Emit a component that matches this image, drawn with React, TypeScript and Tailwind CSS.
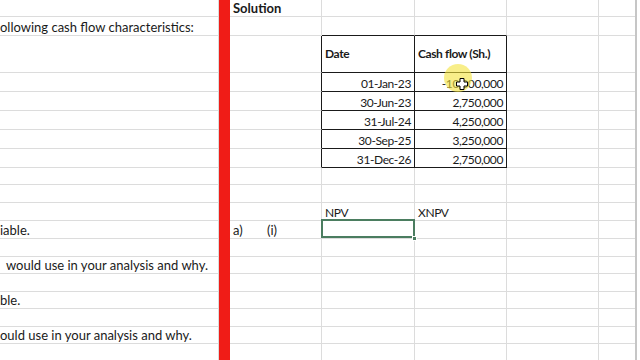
import type { ReactNode } from "react";

type Row = {
  h: number;
  a?: ReactNode;
  b?: ReactNode;
  c?: ReactNode;
  d?: ReactNode;
  cAlign?: "left" | "right";
  dAlign?: "left" | "right";
  topOfTable?: boolean;
  inTable?: boolean;
  head?: boolean;
  selected?: boolean;
};

const rows: Row[] = [
  { h: 17, b: <span className="font-bold text-[13px] tracking-normal">Solution</span> },
  { h: 19, a: "ollowing cash flow characteristics:", topOfTable: true },
  { h: 37, inTable: true, head: true, c: <span className="font-bold">Date</span>, d: <span className="font-bold">Cash flow (Sh.)</span> },
  { h: 19, inTable: true, c: "01-Jan-23", d: "-10,000,000", cAlign: "right", dAlign: "right" },
  { h: 19, inTable: true, c: "30-Jun-23", d: "2,750,000", cAlign: "right", dAlign: "right" },
  { h: 19, inTable: true, c: "31-Jul-24", d: "4,250,000", cAlign: "right", dAlign: "right" },
  { h: 19, inTable: true, c: "30-Sep-25", d: "3,250,000", cAlign: "right", dAlign: "right" },
  { h: 19, inTable: true, c: "31-Dec-26", d: "2,750,000", cAlign: "right", dAlign: "right" },
  { h: 17 },
  { h: 18 },
  { h: 18, c: "NPV", d: "XNPV" },
  {
    h: 18,
    a: "iable.",
    b: (
      <span className="flex text-[13px] tracking-normal">
        <span className="w-[34px]">a)</span>
        <span>(i)</span>
      </span>
    ),
    selected: true,
  },
  { h: 18 },
  { h: 17, a: <span className="pl-[6px]">would use in your analysis and why.</span> },
  { h: 18 },
  { h: 17, a: "ble." },
  { h: 18 },
  { h: 17, a: "ould use in your analysis and why." },
  { h: 18 },
];

function Cell({
  w,
  children,
  align = "left",
  center = false,
  className = "",
}: {
  w: string;
  children?: ReactNode;
  align?: "left" | "right";
  center?: boolean;
  className?: string;
}) {
  return (
    <div
      className={`${w} shrink-0 h-full flex px-[3px] whitespace-nowrap border-b ${
        center ? "items-center" : "items-end pb-[1px]"
      } ${align === "right" ? "justify-end" : "justify-start"} ${className}`}
    >
      {children}
    </div>
  );
}

export default function App() {
  return (
    <div
      className="relative w-[640px] h-[360px] overflow-hidden bg-white text-[12px] tracking-[-0.4px] leading-none text-[#1a1a1a]"
      style={{ fontFamily: "Lato, 'Liberation Sans', sans-serif" }}
    >
      {rows.map((r, i) => {
        const tbl = r.inTable;
        return (
          <div key={i} className="flex" style={{ height: r.h }}>
            <Cell w="w-[219px]" className="border-r border-b-[#dcdcdc] border-r-[#dcdcdc] pl-0 text-[13px] tracking-normal">
              {r.a}
            </Cell>
            <div className="w-[11px] shrink-0 h-full bg-[#f01c17]" />
            <Cell
              w="w-[92px]"
              className={`border-r border-b-[#dcdcdc] ${tbl ? "border-r-[#1a1a1a]" : "border-r-[#dcdcdc]"}`}
            >
              {r.b}
            </Cell>
            <Cell
              w="w-[93px]"
              align={r.cAlign}
              center={r.head}
              className={`border-r ${
                r.selected
                  ? "relative border-r-[#dcdcdc] border-b-[#dcdcdc]"
                  : tbl
                  ? "border-r-[#1a1a1a] border-b-[#1a1a1a]"
                  : r.topOfTable
                  ? "border-r-[#dcdcdc] border-b-[#1a1a1a]"
                  : "border-r-[#dcdcdc] border-b-[#dcdcdc]"
              }`}
            >
              {r.c}
              {r.selected && (
                <>
                  <div className="absolute left-[-1px] top-[-2px] w-[94px] h-[19px] border-2 border-[#4b7d60]" />
                  <div className="absolute right-[-3px] bottom-[-3px] w-[5px] h-[5px] bg-[#4b7d60] border border-white" />
                </>
              )}
            </Cell>
            <Cell
              w="w-[92px]"
              align={r.dAlign}
              center={r.head}
              className={`border-r ${
                tbl
                  ? "border-r-[#1a1a1a] border-b-[#1a1a1a]"
                  : r.topOfTable
                  ? "border-r-[#dcdcdc] border-b-[#1a1a1a]"
                  : "border-r-[#dcdcdc] border-b-[#dcdcdc]"
              }`}
            >
              {r.d}
            </Cell>
            <Cell w="w-[92px]" className="border-r border-r-[#dcdcdc] border-b-[#dcdcdc]" />
            <Cell w="w-[36px]" className="border-b-[#dcdcdc]" />
            <div className="w-[2px] shrink-0 h-full bg-[#c6c6c6]" />
            <div className="flex-1 h-full bg-white" />
          </div>
        );
      })}

      {/* cursor highlight over the first cash flow */}
      <div className="absolute left-[444px] top-[64px] w-[28px] h-[28px] rounded-full bg-[#f3e33a]/60" />
      <svg className="absolute left-[456px] top-[78px]" width="12" height="12" viewBox="0 0 12 12">
        <path d="M4 0.5h4v3.5h3.5v4H8v3.5H4V8H0.5V4H4z" fill="#fff" stroke="#000" strokeWidth="1" />
      </svg>
    </div>
  );
}
